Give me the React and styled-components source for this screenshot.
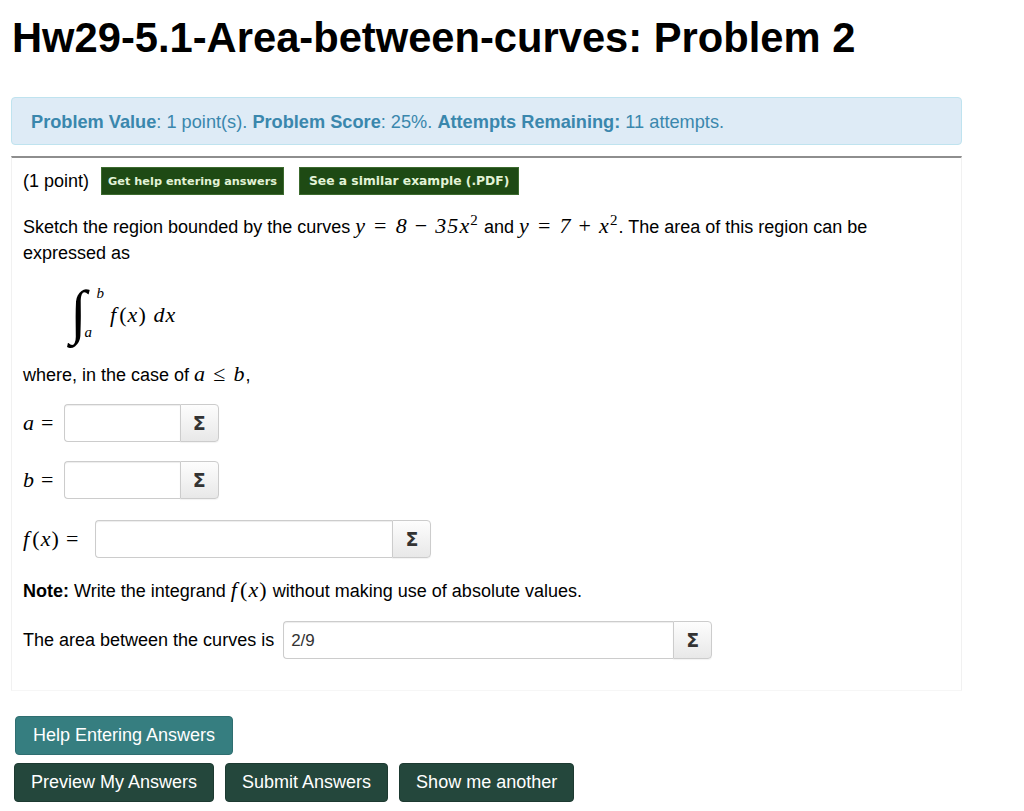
import React from "react";
import styled, { createGlobalStyle } from "styled-components";

const GlobalStyle = createGlobalStyle`
  body {
    margin: 0;
    background: #fff;
    font-family: "Liberation Sans", Arial, sans-serif;
    color: #000;
  }
`;

const Page = styled.div`
  padding: 14px 0 0 11px;
  width: 951px;
`;

const Title = styled.h1`
  margin: 0 0 35px 1px;
  font-size: 41.7px;
  line-height: 48px;
  font-weight: bold;
`;

const InfoBox = styled.div`
  background: #deebf6;
  border: 1px solid #bfe3ef;
  border-radius: 4px;
  padding: 14px 19px 12px;
  font-size: 18.2px;
  line-height: 20px;
  color: #3a87ad;
`;

const ProblemArea = styled.div`
  margin-top: 11px;
  border-top: 2px solid #8e8e8e;
  border-left: 1px solid #f1f1f1;
  border-right: 1px solid #f1f1f1;
  border-bottom: 1px solid #f6f6f6;
  padding: 9px 11px 31px;
  font-size: 18px;
`;

const PointRow = styled.div`
  display: flex;
  align-items: center;
  gap: 12px;
  height: 28px;
`;

const GreenLink = styled.span`
  display: inline-flex;
  align-items: center;
  height: 28px;
  box-sizing: border-box;
  padding: 0 ${(p) => p.$pad}px;
  background: #1e4a14;
  border: 1px solid #3c6a2e;
  color: #e2f3d6;
  font-family: "DejaVu Sans", Verdana, sans-serif;
  font-size: ${(p) => p.$size}px;
  font-weight: bold;
  margin-left: ${(p) => p.$ml || 0}px;
`;

const Para = styled.p`
  margin: ${(p) => p.$mt}px 0 0;
  max-width: 900px;
  line-height: 26px;
`;

const M = styled.span`
  font-family: "Liberation Serif", "Times New Roman", serif;
  font-size: 22px;
  font-style: italic;
  letter-spacing: 1.1px;
  line-height: 1;
`;

const Up = styled.span`
  font-style: normal;
  margin: 0 ${(p) => p.$sp || 0}px;
`;

const FItalic = styled.span`
  margin-right: 2px;
`;

const Sup = styled.sup`
  font-size: 15px;
  font-style: normal;
  line-height: 0;
`;

const IntegralBlock = styled.div`
  display: flex;
  align-items: center;
  margin: 10px 0 0 47px;
  height: 72px;
`;

const IntSign = styled.span`
  font-family: "Liberation Serif", serif;
  font-size: 60px;
  line-height: 64px;
  font-style: italic;
  display: inline-block;
`;

const Limits = styled.div`
  display: flex;
  flex-direction: column;
  justify-content: space-between;
  height: 54px;
  font-family: "Liberation Serif", serif;
  font-style: italic;
  font-size: 15px;
  line-height: 15px;
  margin: 2px 0 0 -2px;
`;

const UpperLimit = styled.span`
  margin-left: 12px;
`;

const Integrand = styled.span`
  font-family: "Liberation Serif", serif;
  font-style: italic;
  font-size: 22px;
  letter-spacing: 1.1px;
  margin: 6px 0 0 6px;
`;

const AnswerRow = styled.div`
  display: flex;
  align-items: center;
  margin-top: ${(p) => p.$mt}px;
  gap: ${(p) => p.$gap}px;
`;

const RowLabel = styled.span`
  font-family: ${(p) => (p.$math ? `"Liberation Serif", serif` : `"Liberation Sans", Arial, sans-serif`)};
  font-style: ${(p) => (p.$math ? "italic" : "normal")};
  font-size: ${(p) => (p.$math ? "22px" : "18px")};
  letter-spacing: ${(p) => (p.$math ? "1.1px" : "0")};
`;

const InputGroup = styled.div`
  display: flex;
  height: 38px;
`;

const TextInput = styled.div`
  width: ${(p) => p.$w}px;
  box-sizing: border-box;
  border: 1px solid #cccccc;
  border-right: none;
  border-radius: 4px 0 0 4px;
  background: #fff;
  box-shadow: inset 0 1px 1px rgba(0, 0, 0, 0.075);
  padding: 2px 7px 0;
  display: flex;
  align-items: center;
  font-size: 17px;
  color: #333;
`;

const SigmaButton = styled.div`
  width: 39px;
  box-sizing: border-box;
  border: 1px solid #cccccc;
  border-radius: 0 4px 4px 0;
  background: linear-gradient(#fdfdfd, #e8e8e8);
  display: flex;
  align-items: center;
  justify-content: center;
  font-family: "DejaVu Sans", sans-serif;
  font-weight: bold;
  font-size: 19px;
  color: #333;
  box-shadow: 0 1px 1px rgba(0, 0, 0, 0.05);
`;

const Buttons = styled.div`
  margin: 25px 0 0 4px;
  display: flex;
  flex-direction: column;
  gap: 8px;
`;

const ButtonRow = styled.div`
  display: flex;
  gap: ${(p) => p.$gap || 11}px;
`;

const ActionButton = styled.div`
  height: 39px;
  box-sizing: border-box;
  padding: 0 ${(p) => p.$pad || 16}px;
  display: inline-flex;
  align-items: center;
  border-radius: 4px;
  background: ${(p) => (p.$teal ? "#367e80" : "#24473c")};
  border: 1px solid ${(p) => (p.$teal ? "#2f6e70" : "#1d3a31")};
  color: #fff;
  font-size: 18px;
  margin-left: ${(p) => p.$ml || 0}px;
`;

const Field = ({ label, math, w, value, mt, gap = 13 }) => (
  <AnswerRow $mt={mt} $gap={gap}>
    <RowLabel $math={math}>{label}</RowLabel>
    <InputGroup>
      <TextInput $w={w}>{value}</TextInput>
      <SigmaButton>Σ</SigmaButton>
    </InputGroup>
  </AnswerRow>
);

const FofX = () => (
  <>
    <FItalic>f</FItalic>
    <Up>(</Up>x<Up>)</Up>
  </>
);

export default function App() {
  return (
    <>
      <GlobalStyle />
      <Page>
        <Title>Hw29-5.1-Area-between-curves: Problem 2</Title>

        <InfoBox>
          <b>Problem Value</b>: 1 point(s). <b>Problem Score</b>: 25%.{" "}
          <b>Attempts Remaining:</b> 11 attempts.
        </InfoBox>

        <ProblemArea>
          <PointRow>
            <span>(1 point)</span>
            <GreenLink $pad={6} $size={11.3}>
              Get help entering answers
            </GreenLink>
            <GreenLink $pad={9} $size={12.3} $ml={3}>
              See a similar example (.PDF)
            </GreenLink>
          </PointRow>

          <Para $mt={19}>
            Sketch the region bounded by the curves{" "}
            <M>
              y<Up $sp={8}>=</Up>8<Up $sp={7}>−</Up>35x<Sup>2</Sup>
            </M>{" "}
            and{" "}
            <M>
              y<Up $sp={8}>=</Up>7<Up $sp={7}>+</Up>x<Sup>2</Sup>
            </M>
            . The area of this region can be expressed as
          </Para>

          <IntegralBlock>
            <IntSign>∫</IntSign>
            <Limits>
              <UpperLimit>b</UpperLimit>
              <span>a</span>
            </Limits>
            <Integrand>
              <FofX /> dx
            </Integrand>
          </IntegralBlock>

          <Para $mt={14}>
            where, in the case of <M>a<Up $sp={7}>≤</Up>b</M>,
          </Para>

          <Field label={<>a<Up $sp={6}>=</Up></>} math w={116} mt={16} gap={3} />
          <Field label={<>b<Up $sp={6}>=</Up></>} math w={116} mt={19} gap={3} />
          <Field
            label={
              <>
                <FofX />
                <Up $sp={6}>=</Up>
              </>
            }
            math
            w={297}
            mt={21}
            gap={10}
          />

          <Para $mt={20}>
            <b>Note:</b> Write the integrand{" "}
            <M>
              <FofX />
            </M>{" "}
            without making use of absolute values.
          </Para>

          <Field label="The area between the curves is" w={390} value="2/9" mt={17} gap={9} />
        </ProblemArea>

        <Buttons>
          <ButtonRow>
            <ActionButton $teal $pad={17}>
              Help Entering Answers
            </ActionButton>
          </ButtonRow>
          <ButtonRow $gap={11}>
            <ActionButton $ml={-1}>Preview My Answers</ActionButton>
            <ActionButton>Submit Answers</ActionButton>
            <ActionButton>Show me another</ActionButton>
          </ButtonRow>
        </Buttons>
      </Page>
    </>
  );
}
